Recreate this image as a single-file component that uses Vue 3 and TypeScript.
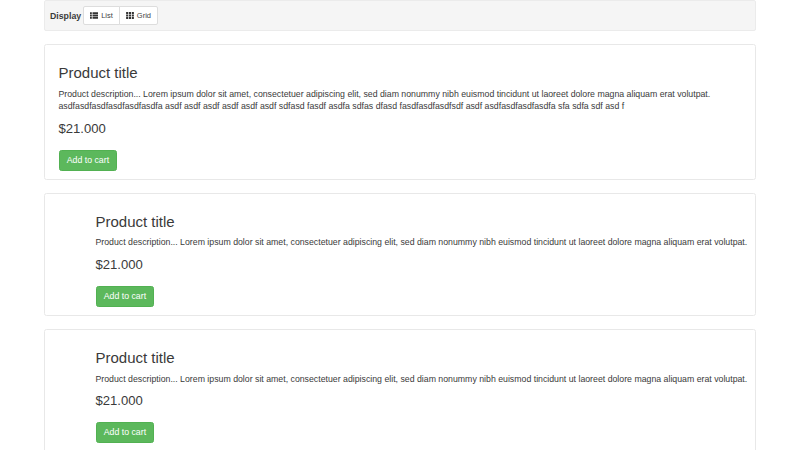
<script setup lang="ts">
const short = 'Product description... Lorem ipsum dolor sit amet, consectetuer adipiscing elit, sed diam nonummy nibh euismod tincidunt ut laoreet dolore magna aliquam erat volutpat.'
const long = short + ' asdfasdfasdfasdfasdfasdfa asdf asdf asdf asdf asdf asdf sdfasd fasdf asdfa sdfas dfasd fasdfasdfasdfsdf asdf asdfasdfasdfasdfa sfa sdfa sdf asd f'
const items = [
  { id: 1, desc: long, wide: true },
  { id: 2, desc: short, wide: false },
  { id: 3, desc: short, wide: false },
]
</script>

<template>
  <div class="page">
    <div class="well">
      <strong class="label">Display</strong>
      <div class="group">
        <a class="seg">
          <svg class="ico" width="8" height="7" viewBox="0 0 11 9"><path fill="#333" d="M0 0h2.5v2.5H0zM3.5 0H11v2.5H3.5zM0 3.25h2.5v2.5H0zM3.5 3.25H11v2.5H3.5zM0 6.5h2.5V9H0zM3.5 6.5H11V9H3.5z"/></svg>
          <span>List</span>
        </a>
        <a class="seg">
          <svg class="ico" width="8" height="7" viewBox="0 0 10 9"><path fill="#333" d="M0 0h2.7v2.5H0zM3.6 0h2.7v2.5H3.6zM7.3 0H10v2.5H7.3zM0 3.25h2.7v2.5H0zM3.6 3.25h2.7v2.5H3.6zM7.3 3.25H10v2.5H7.3zM0 6.5h2.7V9H0zM3.6 6.5h2.7V9H3.6zM7.3 6.5H10V9H7.3z"/></svg>
          <span>Grid</span>
        </a>
      </div>
    </div>
    <div v-for="item in items" :key="item.id" class="card" :class="{ wide: item.wide }">
      <h3 class="title">Product title</h3>
      <p class="desc">{{ item.desc }}</p>
      <div class="price">$21.000</div>
      <a class="btn">Add to cart</a>
    </div>
  </div>
</template>

<style>
html, body { margin: 0; background: #fff; }
</style>

<style scoped>
.page {
  width: 712px;
  margin: 0 auto;
  font-family: "Liberation Sans", Arial, sans-serif;
  color: #3a3a3a;
  font-size: 8.75px;
}
.well {
  display: flex;
  align-items: center;
  gap: 2px;
  box-sizing: border-box;
  height: 31px;
  padding: 0 5px;
  background: #f5f5f5;
  border: 1px solid #ebebeb;
  border-radius: 2px;
  margin-bottom: 13px;
}
.label { font-size: 8.75px; font-weight: 700; }
.group { display: flex; }
.seg {
  display: flex;
  align-items: center;
  gap: 3px;
  box-sizing: border-box;
  height: 18.5px;
  padding: 0 6px;
  font-size: 7.5px;
  background: #fff;
  border: 1px solid #ddd;
  color: #444;
}
.ico { flex: none; }
.seg:first-child { border-radius: 2px 0 0 2px; }
.seg + .seg { margin-left: -1px; border-radius: 0 2px 2px 0; }
.card {
  box-sizing: border-box;
  padding: 20px 5px 8.2px 50.5px;
  background: #fff;
  border: 1px solid #e8e8e8;
  border-radius: 2.5px;
  margin-bottom: 12.5px;
}
.card.wide { padding-left: 13.5px; }
.title { margin: 0 0 6.25px; font-size: 15px; font-weight: 400; line-height: 16.5px; }
.desc { margin: 0 0 9px; font-size: 8.75px; line-height: 12.5px; }
.price { font-size: 13.1px; line-height: 14.5px; margin-bottom: 13.5px; }
.btn {
  display: block;
  width: fit-content;
  box-sizing: border-box;
  height: 21.25px;
  padding: 0 7.25px;
  font-size: 8.75px;
  line-height: 19.25px;
  color: #fff;
  background: #5cb85c;
  border: 1px solid #52b152;
  border-radius: 2.5px;
}
</style>
